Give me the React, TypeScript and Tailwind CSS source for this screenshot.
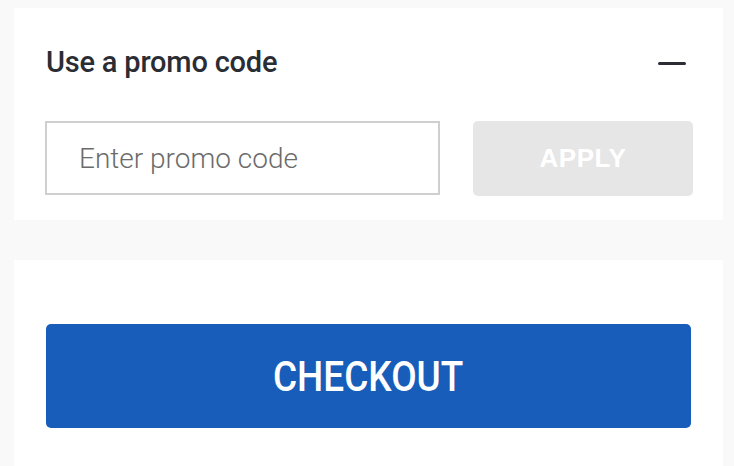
const font = { fontFamily: 'Roboto, "DejaVu Sans", sans-serif' };

export default function App() {
  return (
    <div className="min-h-[466px] bg-[#f9f9f9] pl-[14px] pr-[11px] pt-[8px] overflow-hidden" style={font}>
      {/* Promo code */}
      <div className="bg-white pl-[31px] pr-[32px] pt-[33px] pb-[24px]">
        <div className="flex items-center justify-between h-[60px] -mt-[8px]">
          <h2 className="text-[29px] font-medium text-[#2a2d34] tracking-[-0.2px] pl-[1px]">Use a promo code</h2>
          <div className="w-[28px] h-[3px] bg-[#2a2d34] rounded-full mr-[5px]" />
        </div>
        <div className="flex gap-[33px] mt-[28px]">
          <input
            placeholder="Enter promo code"
            className="w-[395px] h-[74px] border-2 border-[#cfcfcf] px-[32px] text-[28px] font-light text-[#333] placeholder:text-[#6b6b6b] outline-none"
            style={font}
          />
          <button
            className="flex-1 h-[75px] rounded-[5px] bg-[#e6e6e6] text-white text-[26px] font-bold tracking-[0.5px] mr-[-2px]"
            style={{ fontFamily: '"Liberation Sans", Arial, sans-serif' }}
          >
            APPLY
          </button>
        </div>
      </div>

      {/* Checkout */}
      <div className="bg-white mt-[40px] px-[32px] pt-[64px] pb-[40px]">
        <button className="w-full h-[104px] rounded-[5px] bg-[#175db9] text-white text-[42px] font-medium">
          <span className="inline-block scale-x-[0.88]">CHECKOUT</span>
        </button>
      </div>
    </div>
  );
}
